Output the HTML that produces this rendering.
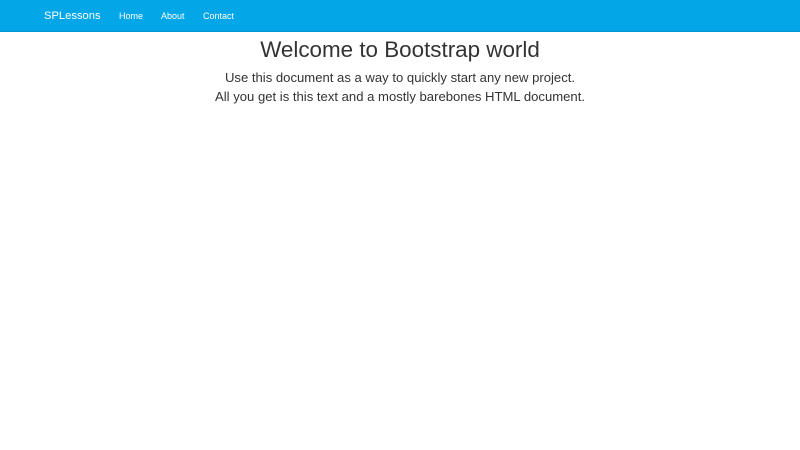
<!DOCTYPE html>
<html><head><style>
body{margin:0;background:#fff;font-family:"Liberation Sans",sans-serif;width:800px;height:450px;overflow:hidden}
.nav{height:31px;background:#03a6e7;position:relative;border-bottom:1px solid #0396d0}
.nav span{position:absolute;color:#fff;white-space:nowrap}
.brand{left:44px;top:10px;font-size:11.2px}
.l{font-size:9px;top:11px}
h1{margin:0;position:absolute;top:37px;width:800px;text-align:center;font-weight:normal;font-size:22.4px;color:#333}
p{margin:0;position:absolute;width:800px;text-align:center;font-size:13.1px;color:#333}
</style></head><body>
<div class="nav"><span class="brand">SPLessons</span><span class="l" style="left:119px">Home</span><span class="l" style="left:161px">About</span><span class="l" style="left:203px">Contact</span></div>
<h1>Welcome to Bootstrap world</h1>
<p style="top:70px">Use this document as a way to quickly start any new project.</p>
<p style="top:89px">All you get is this text and a mostly barebones HTML document.</p>
</body></html>
